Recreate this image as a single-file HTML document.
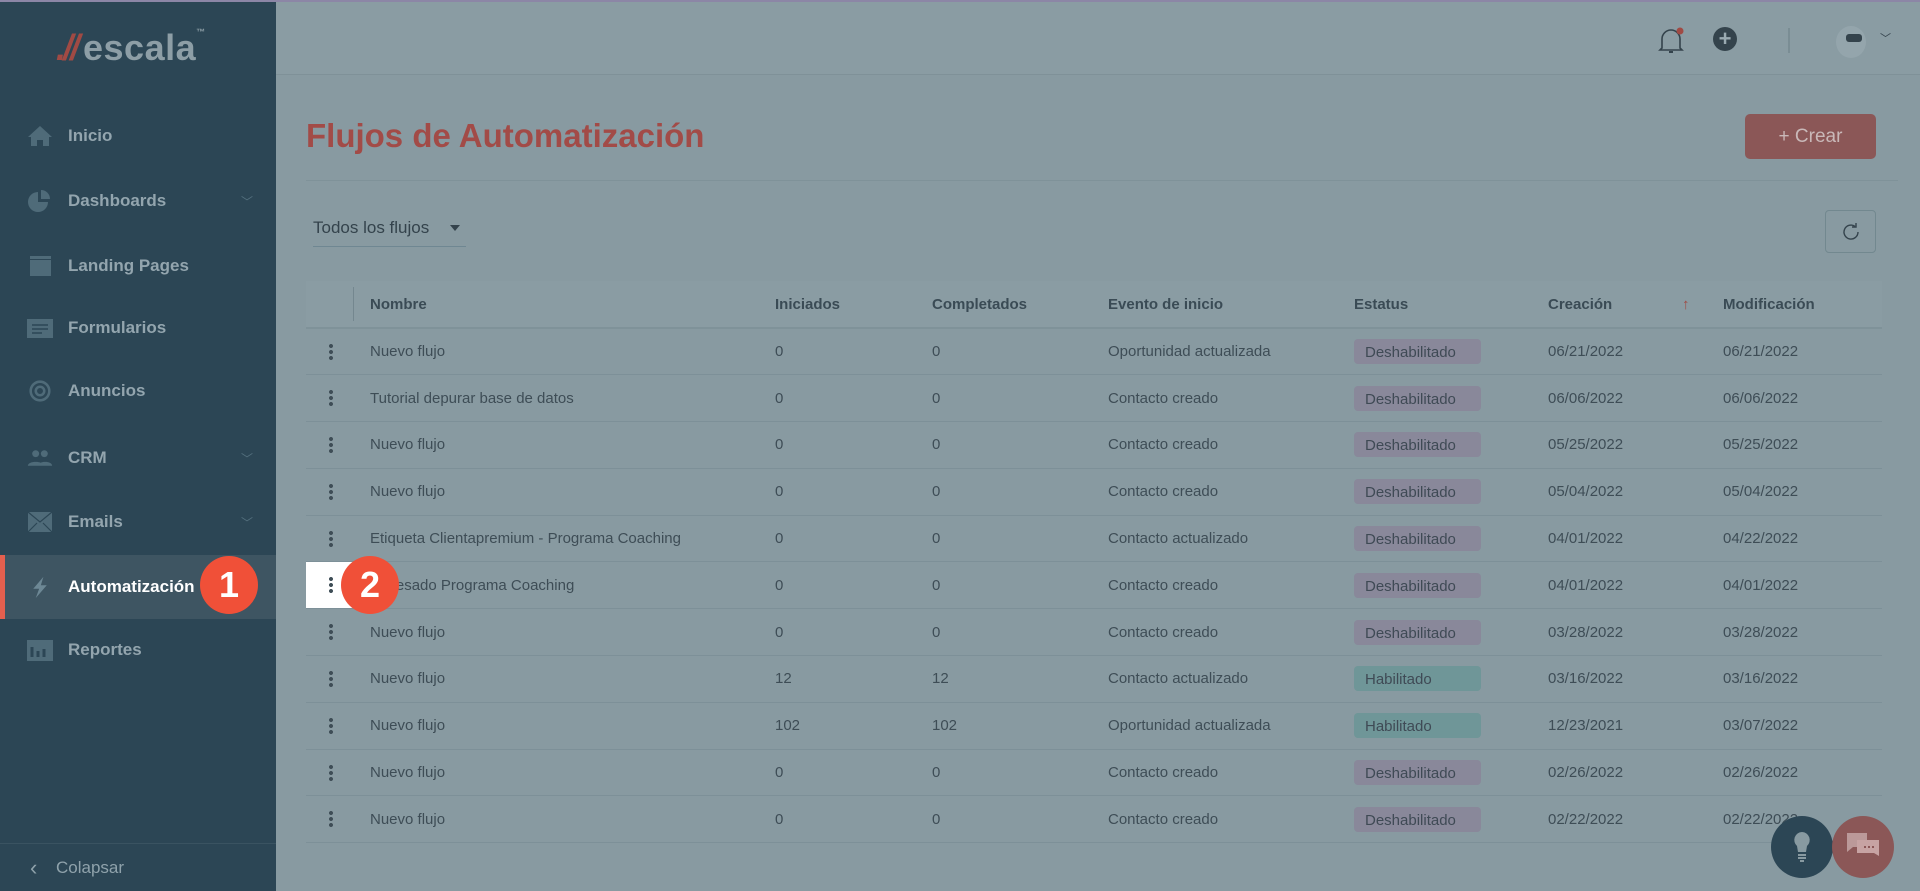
<!DOCTYPE html>
<html><head><meta charset="utf-8"><style>
*{box-sizing:border-box;margin:0;padding:0}
body{width:1920px;height:891px;overflow:hidden;background:#889aa1;font-family:"Liberation Sans",sans-serif;position:relative;color:#3c4b54}
.topline{position:absolute;left:0;top:0;width:1920px;height:2px;background:#8c86a6;z-index:5}
.side{position:absolute;left:0;top:0;width:276px;height:891px;background:#2c4655}
.logo{position:absolute;left:56px;top:27px;font-size:36px;font-weight:bold;color:#8d9ea6;letter-spacing:0.5px}
.logo span{color:#a04a44;font-style:italic;letter-spacing:-3px;margin-right:6px}
.mi{position:absolute;left:0;width:276px;height:40px;display:flex;align-items:center;color:#93a5ae;font-size:17px;font-weight:bold}
.mi .ic{position:absolute;left:27px;width:26px;height:22px}
.mi .t{position:absolute;left:68px}
.mi .ch{position:absolute;left:241px;color:#54707e;font-size:12px;font-weight:normal}
.active{background:#3e5562;height:64px}
.active::before{content:"";position:absolute;left:0;top:0;width:5px;height:64px;background:#e45f4e}
.active .t{color:#fff}
.badge{position:absolute;width:58px;height:58px;border-radius:50%;background:#f05038;color:#fff;font-weight:bold;font-size:36px;display:flex;align-items:center;justify-content:center;z-index:4}
.coll{position:absolute;left:0;top:843px;width:276px;border-top:1px solid #3a5361;height:48px;color:#8fa2ab;font-size:17px}
.header{position:absolute;left:276px;top:2px;right:0;height:73px;border-bottom:1px solid #7f9198;background:#8a9ca3}
.title{position:absolute;left:306px;top:117px;font-size:33px;font-weight:bold;color:#a24b47}
.crear{position:absolute;left:1745px;top:114px;width:131px;height:45px;background:#8b5757;border-radius:5px;color:#c9b8b8;font-size:19px;display:flex;align-items:center;justify-content:center}
.hr{position:absolute;left:306px;top:180px;width:1592px;height:1px;background:#7f9299}
.dd{position:absolute;left:313px;top:218px;width:153px;height:29px;border-bottom:1px solid #6f8792;font-size:17px;color:#34434c}
.dd::after{content:"";position:absolute;left:137px;top:7px;border:5px solid transparent;border-top:6px solid #34434c}
.ref{position:absolute;left:1825px;top:210px;width:51px;height:43px;border:1px solid #72888f;border-radius:4px}
table{position:absolute;left:306px;top:281px;width:1576px;border-collapse:collapse;font-size:15px}
th{height:47px;text-align:left;font-weight:bold;color:#3a4b55;background:#8a9ca3;border-bottom:2px solid #7f9299}
td{height:46.8px;border-bottom:1px solid #7d9098;color:#3e4d56}
td:nth-child(2),th:nth-child(2){padding-left:16px}
.pill{display:inline-block;width:127px;height:25px;line-height:27px;border-radius:4px;padding-left:11px;background:#89889a;color:#3f4a55}
.pill.h{background:#6f9698}
.dots{width:4px;height:18px;margin-left:23px;background:radial-gradient(circle,#3e4d56 1.8px,transparent 2.2px) 0 0/4px 6px repeat-y}
.fab{position:absolute;width:62px;height:62px;border-radius:50%;top:816px}
</style></head><body>
<div class="topline"></div>
<div class="side">
<div class="logo"><span>.//</span>escala<sup style="font-size:9px;vertical-align:top">™</sup></div>
<div class="mi" style="top:116px"><svg class="ic" viewBox="0 0 26 22"><path d="M13 1L1 12h3v9h6v-6h6v6h6v-9h3z" fill="#4f6b79"/></svg><span class="t">Inicio</span></div>
<div class="mi" style="top:181px"><svg class="ic" viewBox="0 0 26 22"><path d="M11 2a10 10 0 1 0 10 10H11z" fill="#4f6b79"/><path d="M14 0v9h9a9 9 0 0 0-9-9z" fill="#4f6b79"/></svg><span class="t">Dashboards</span><span class="ch">﹀</span></div>
<div class="mi" style="top:246px"><svg class="ic" viewBox="0 0 26 22"><rect x="3" y="1" width="21" height="20" fill="#4f6b79"/><rect x="3" y="4" width="21" height="1" fill="#2c4655"/></svg><span class="t">Landing Pages</span></div>
<div class="mi" style="top:308px"><svg class="ic" viewBox="0 0 26 22"><rect x="0" y="2" width="26" height="19" fill="#4f6b79"/><path d="M5 8h16M5 12h16M5 16h10" stroke="#2c4655" stroke-width="1.5"/></svg><span class="t">Formularios</span></div>
<div class="mi" style="top:371px"><svg class="ic" viewBox="0 0 26 26"><circle cx="13" cy="13" r="11" fill="none" stroke="#4f6b79" stroke-width="3"/><circle cx="13" cy="13" r="5" fill="none" stroke="#4f6b79" stroke-width="3"/></svg><span class="t">Anuncios</span></div>
<div class="mi" style="top:438px"><svg class="ic" viewBox="0 0 30 22"><circle cx="10" cy="6" r="4" fill="#4f6b79"/><circle cx="20" cy="6" r="4" fill="#4f6b79"/><path d="M1 20c0-6 18-6 18 0zM13 20c0-6 16-6 16 0z" fill="#4f6b79"/></svg><span class="t">CRM</span><span class="ch">﹀</span></div>
<div class="mi" style="top:502px"><svg class="ic" viewBox="0 0 26 22"><rect x="1" y="1" width="24" height="20" fill="#4f6b79"/><path d="M1 1l12 10 12-10M1 21l9-9M25 21l-9-9" stroke="#2c4655" stroke-width="1.2" fill="none"/></svg><span class="t">Emails</span><span class="ch">﹀</span></div>
<div class="mi active" style="top:555px"><svg class="ic" viewBox="0 0 26 26"><path d="M17 1L5 15h7l-4 11 13-15h-7z" fill="#6d8895"/></svg><span class="t">Automatización</span></div>
<div class="mi" style="top:630px"><svg class="ic" viewBox="0 0 26 22"><rect x="0" y="1" width="26" height="21" fill="#4f6b79"/><path d="M5 18V8M11 18V12M17 18V10" stroke="#2c4655" stroke-width="3"/></svg><span class="t">Reportes</span></div>
<div class="coll"><span style="position:absolute;left:30px;top:11px;font-size:22px">‹</span><span style="position:absolute;left:56px;top:14px">Colapsar</span></div>
</div>
<div class="badge" style="left:200px;top:556px">1</div>
<div class="header">
<svg style="position:absolute;left:1382px;top:24px" width="26" height="30" viewBox="0 0 26 30"><path d="M4 22V13a9 9 0 0 1 18 0v9l2 2H2z" fill="none" stroke="#34434c" stroke-width="1.6"/><path d="M11 26h4" stroke="#34434c" stroke-width="2"/><circle cx="22" cy="5" r="3.5" fill="#a04a44"/></svg>
<div style="position:absolute;left:1437px;top:25px;width:24px;height:24px;border-radius:50%;background:#34434c;color:#9aaab1;font-size:22px;line-height:23px;text-align:center;font-weight:bold">+</div>
<div style="position:absolute;left:1512px;top:26px;width:2px;height:25px;background:#7a8d94"></div>
<div style="position:absolute;left:1560px;top:24px;width:30px;height:32px;border-radius:50%;background:#94a5ac"><div style="margin:8px 0 0 10px;width:16px;height:8px;border-radius:3px;background:#34434c"></div></div>
<div style="position:absolute;left:1604px;top:28px;color:#34434c;font-size:11px">﹀</div>
</div>
<div class="title">Flujos de Automatización</div>
<div class="crear">+ Crear</div>
<div class="hr"></div>
<div class="dd">Todos los flujos</div>
<div class="ref"><svg style="margin:11px 0 0 15px" width="20" height="20" viewBox="0 0 20 20"><path d="M17 10a7 7 0 1 1-3-5.7" fill="none" stroke="#34434c" stroke-width="1.4"/><path d="M15 1v4h-4" fill="none" stroke="#34434c" stroke-width="1.4"/></svg></div>
<table>
<tr><th style="width:48px;position:relative"><span style="position:absolute;right:0;top:6px;height:34px;border-right:1px solid #74878f"></span></th><th style="width:421px">Nombre</th><th style="width:157px">Iniciados</th><th style="width:176px">Completados</th><th style="width:246px">Evento de inicio</th><th style="width:194px">Estatus</th><th style="width:175px;position:relative">Creación<span style="position:absolute;left:134px;color:#a04a44;font-weight:normal">↑</span></th><th>Modificación</th></tr>
<tr><td><div class="dots"></div></td><td>Nuevo flujo</td><td>0</td><td>0</td><td>Oportunidad actualizada</td><td><span class="pill">Deshabilitado</span></td><td>06/21/2022</td><td>06/21/2022</td></tr>
<tr><td><div class="dots"></div></td><td>Tutorial depurar base de datos</td><td>0</td><td>0</td><td>Contacto creado</td><td><span class="pill">Deshabilitado</span></td><td>06/06/2022</td><td>06/06/2022</td></tr>
<tr><td><div class="dots"></div></td><td>Nuevo flujo</td><td>0</td><td>0</td><td>Contacto creado</td><td><span class="pill">Deshabilitado</span></td><td>05/25/2022</td><td>05/25/2022</td></tr>
<tr><td><div class="dots"></div></td><td>Nuevo flujo</td><td>0</td><td>0</td><td>Contacto creado</td><td><span class="pill">Deshabilitado</span></td><td>05/04/2022</td><td>05/04/2022</td></tr>
<tr><td><div class="dots"></div></td><td>Etiqueta Clientapremium - Programa Coaching</td><td>0</td><td>0</td><td>Contacto actualizado</td><td><span class="pill">Deshabilitado</span></td><td>04/01/2022</td><td>04/22/2022</td></tr>
<tr><td style="background:#fff"><div class="dots"></div></td><td>Ingresado Programa Coaching</td><td>0</td><td>0</td><td>Contacto creado</td><td><span class="pill">Deshabilitado</span></td><td>04/01/2022</td><td>04/01/2022</td></tr>
<tr><td><div class="dots"></div></td><td>Nuevo flujo</td><td>0</td><td>0</td><td>Contacto creado</td><td><span class="pill">Deshabilitado</span></td><td>03/28/2022</td><td>03/28/2022</td></tr>
<tr><td><div class="dots"></div></td><td>Nuevo flujo</td><td>12</td><td>12</td><td>Contacto actualizado</td><td><span class="pill h">Habilitado</span></td><td>03/16/2022</td><td>03/16/2022</td></tr>
<tr><td><div class="dots"></div></td><td>Nuevo flujo</td><td>102</td><td>102</td><td>Oportunidad actualizada</td><td><span class="pill h">Habilitado</span></td><td>12/23/2021</td><td>03/07/2022</td></tr>
<tr><td><div class="dots"></div></td><td>Nuevo flujo</td><td>0</td><td>0</td><td>Contacto creado</td><td><span class="pill">Deshabilitado</span></td><td>02/26/2022</td><td>02/26/2022</td></tr>
<tr><td><div class="dots"></div></td><td>Nuevo flujo</td><td>0</td><td>0</td><td>Contacto creado</td><td><span class="pill">Deshabilitado</span></td><td>02/22/2022</td><td>02/22/2022</td></tr>
</table>
<div class="badge" style="left:341px;top:556px">2</div>
<div class="fab" style="left:1771px;background:#2c4655"><svg style="margin:15px 0 0 21px" width="20" height="32" viewBox="0 0 20 32"><path d="M10 1a8 8 0 0 0-5 14l1 6h8l1-6a8 8 0 0 0-5-14z" fill="#889aa1"/><path d="M6 24h8M6 27h8M8 30h4" stroke="#889aa1" stroke-width="2"/></svg></div>
<div class="fab" style="left:1832px;background:#8b5757"><svg style="margin:15px 0 0 13px" width="36" height="32" viewBox="0 0 36 32"><path d="M2 2h20v14H8l-6 5z" fill="#b99"/><path d="M12 9h22v16l-5-3H12z" fill="#c7a3a3"/><path d="M19 16h2M23 16h2M27 16h2" stroke="#8b5757" stroke-width="2"/></svg></div>
</body></html>
